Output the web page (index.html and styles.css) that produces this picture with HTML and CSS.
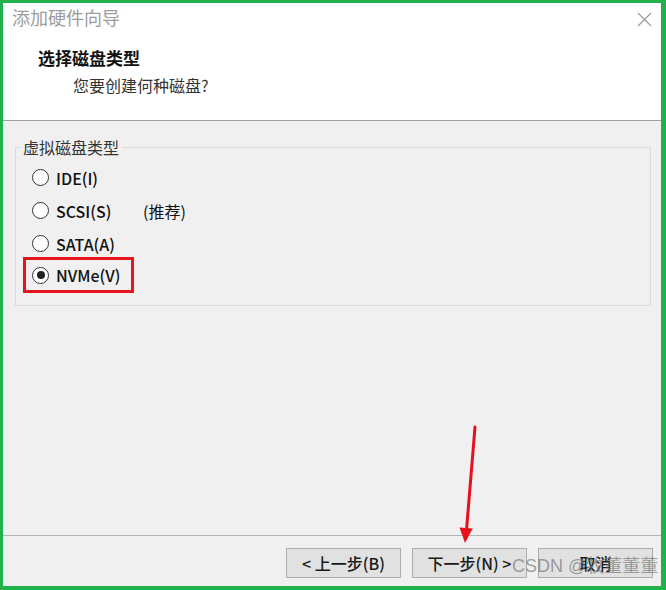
FILE: index.html
```html
<!DOCTYPE html>
<html>
<head>
    <meta charset="utf-8">
    <title>添加硬件向导</title>
    <link rel="stylesheet" href="styles.css">
</head>
<body>
    <div class="window">
        <div class="header">
            <div class="titlebar">
                <span class="title">添加硬件向导</span>
                <span class="close">
                    <svg width="15" height="15" viewBox="0 0 15 15">
                        <path d="M1 1 L14 14 M14 1 L1 14" stroke="#9a9a9a" stroke-width="1.2" fill="none"/>
                    </svg>
                </span>
            </div>
            <div class="heading">选择磁盘类型</div>
            <div class="subheading">您要创建何种磁盘?</div>
        </div>

        <div class="content">
            <div class="group">
                <div class="group-label">虚拟磁盘类型</div>
                <div class="options">
                    <div class="option">
                        <span class="radio"></span>
                        <span class="opt-text">IDE(I)</span>
                    </div>
                    <div class="option">
                        <span class="radio"></span>
                        <span class="opt-text wide">SCSI(S)</span>
                        <span class="note">(推荐)</span>
                    </div>
                    <div class="option">
                        <span class="radio"></span>
                        <span class="opt-text">SATA(A)</span>
                    </div>
                    <div class="option marked">
                        <span class="radio checked"></span>
                        <span class="opt-text">NVMe(V)</span>
                    </div>
                </div>
            </div>
        </div>

        <div class="footer">
            <button class="btn">&lt; 上一步(B)</button>
            <button class="btn">下一步(N) &gt;</button>
            <button class="btn">取消</button>
        </div>
    </div>

    <svg class="overlay" width="666" height="590" viewBox="0 0 666 590">
        <line x1="475" y1="427" x2="466.5" y2="530" stroke="#e8101c" stroke-width="3" stroke-linecap="round"/>
        <polygon points="459.5,527.4 472.7,528.6 465,543" fill="#e8101c"/>
    </svg>
    <div class="watermark">CSDN @牧董董董</div>
</body>
</html>
```

FILE: styles.css
```css
* {
    box-sizing: border-box;
}
body {
    margin: 0;
    position: relative;
    font-family: "Noto Sans CJK SC", "Noto Sans", sans-serif;
    color: #1a1a1a;
}
.window {
    width: 666px;
    height: 590px;
    border-style: solid;
    border-color: #22b14c;
    border-width: 3px 5px 4px 3px;
    display: flex;
    flex-direction: column;
    background: #f0f0f0;
}
.header {
    height: 118px;
    background: #fff;
    border-bottom: 1px solid #a0a0a0;
    padding: 4px 8px 0 9px;
}
.titlebar {
    display: flex;
    justify-content: space-between;
    align-items: flex-start;
}
.title {
    font-size: 18px;
    line-height: 21px;
    color: #9c9c9c;
}
.close {
    width: 15px;
    height: 15px;
    margin: 5px 1px 0 0;
}
.close svg {
    display: block;
}
.heading {
    margin: 20px 0 0 26px;
    font-size: 17px;
    line-height: 20px;
    font-weight: bold;
    color: #111;
}
.subheading {
    margin: 7px 0 0 61px;
    font-size: 16px;
    line-height: 20px;
    color: #333;
}
.content {
    flex: 1;
    padding: 26px 10px 0 12px;
}
.group {
    border: 1px solid #dcdcdc;
}
.group-label {
    width: fit-content;
    margin: -11px 0 0 4px;
    padding: 0 3px;
    background: #f0f0f0;
    font-size: 16px;
    line-height: 20px;
    color: #333;
}
.options {
    padding: 4px 0 13px 16px;
}
.option {
    display: flex;
    align-items: center;
    height: 33px;
    font-size: 16px;
    font-weight: 500;
    color: #111;
}
.radio {
    width: 17px;
    height: 17px;
    border: 1px solid #333;
    border-radius: 50%;
    background: #fff;
    margin-right: 7px;
    display: flex;
    align-items: center;
    justify-content: center;
}
.radio.checked::after {
    content: "";
    width: 8px;
    height: 8px;
    border-radius: 50%;
    background: #222;
}
.opt-text.wide {
    width: 87px;
}
.note {
    font-size: 16px;
    font-weight: normal;
}
.option.marked {
    width: fit-content;
    height: 36px;
    margin: -3px 0 -1px -9px;
    padding: 0 11px 0 6px;
    border: 3px solid #e5141e;
}
.footer {
    height: 51px;
    border-top: 1px solid #b4b4b4;
    display: flex;
    justify-content: flex-end;
    align-items: flex-start;
    gap: 11px;
    padding: 12px 8px 0 0;
}
.btn {
    width: 115px;
    height: 30px;
    background: #e1e1e1;
    border: 1px solid #adadad;
    font-family: "Noto Sans CJK SC", "Noto Sans", sans-serif;
    font-size: 16px;
    font-weight: 500;
    color: #1a1a1a;
    padding: 0;
}
.overlay {
    position: absolute;
    left: 0;
    top: 0;
    pointer-events: none;
}
.watermark {
    position: absolute;
    left: 512px;
    top: 554px;
    font-family: "Liberation Sans", "Noto Sans CJK SC", sans-serif;
    font-size: 18px;
    line-height: 24px;
    color: rgba(120, 120, 120, 0.7);
    white-space: nowrap;
}
```
